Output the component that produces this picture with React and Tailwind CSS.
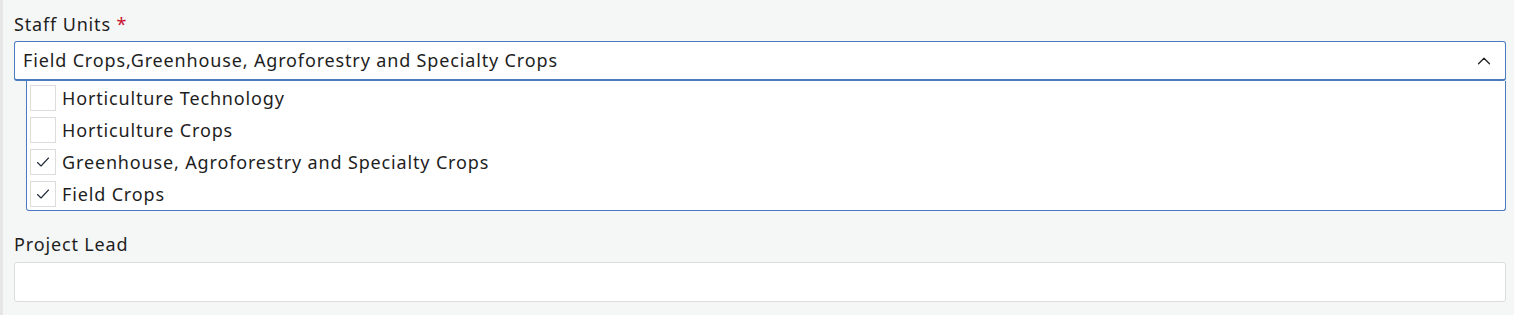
import { ChevronUp } from 'lucide-react'

const units = [
  { name: 'Horticulture Technology', checked: false },
  { name: 'Horticulture Crops', checked: false },
  { name: 'Greenhouse, Agroforestry and Specialty Crops', checked: true },
  { name: 'Field Crops', checked: true },
]

function Check() {
  return (
    <svg width="16" height="16" viewBox="0 0 16 16" fill="none">
      <path d="M2.5 8.5 L6 12 L13.5 4" stroke="#1f2937" strokeWidth="1.1" strokeLinecap="round" strokeLinejoin="round" />
    </svg>
  )
}

export default function App() {
  return (
    <div className="min-h-[315px] w-full border-l-[3px] border-[#e6e6e6] bg-[#f5f6f6] pt-[11px] pl-[11px] pr-[8px] font-['Noto_Sans',sans-serif] text-[18px] tracking-[0.85px] text-[#1e1e1e]">
      <div className="leading-[26px]">
        Staff Units <span className="text-[#c8102e]">*</span>
      </div>
      <div className="mt-[4px] flex h-[40px] items-center justify-between rounded-[3px] border border-b-2 border-[#4a7ac0] bg-white pl-[8px] pr-[10px]">
        <span>Field Crops,Greenhouse, Agroforestry and Specialty Crops</span>
        <ChevronUp size={22} strokeWidth={1.4} className="text-[#222]" />
      </div>
      <div className="ml-[12px] rounded-b-[3px] border border-t-0 border-[#4a7ac0] bg-white pt-[1px]">
        {units.map((u) => (
          <div key={u.name} className="flex h-[32px] items-center gap-[6px] pl-[3px]">
            <div className="flex h-[26px] w-[26px] items-center justify-center border border-[#dcdcdc] bg-white">
              {u.checked && <Check />}
            </div>
            <span>{u.name}</span>
          </div>
        ))}
      </div>
      <div className="mt-[20px] leading-[26px]">Project Lead</div>
      <div className="mt-[5px] h-[40px] rounded-[3px] border border-[#dcdcdc] bg-white" />
    </div>
  )
}
